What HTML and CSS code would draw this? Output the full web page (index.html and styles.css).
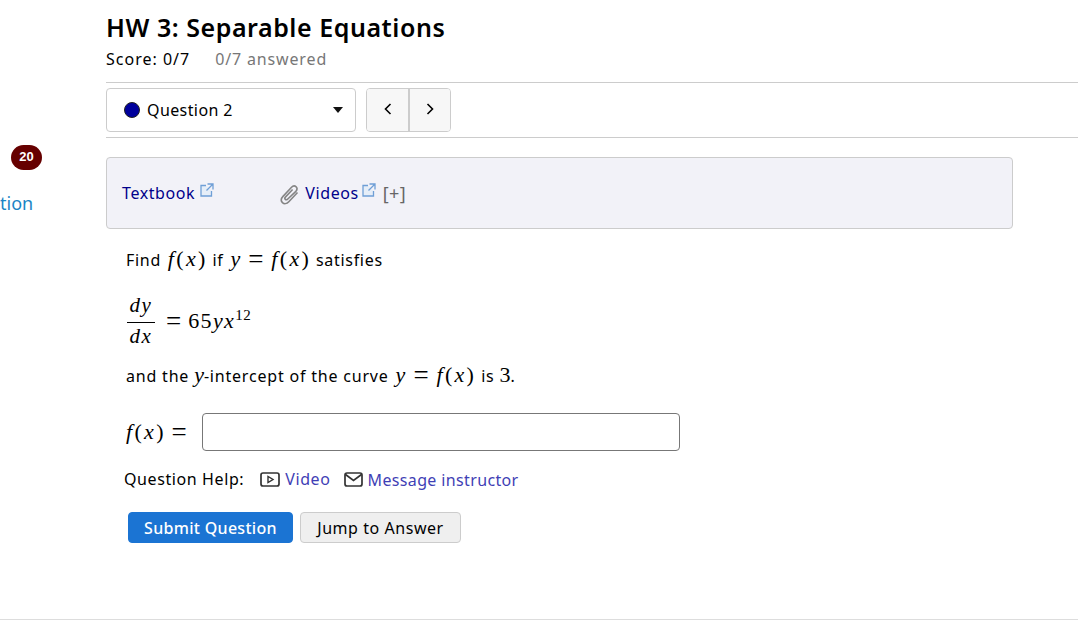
FILE: index.html
```html
<!DOCTYPE html>
<html lang="en">
<head>
  <meta charset="UTF-8" />
  <title>HW 3: Separable Equations</title>
  <link rel="stylesheet" href="styles.css">
</head>
<body>
  <div class="page">
    <!-- Left nav, cut off by the window edge -->
    <div class="sidebar">
      <span class="badge">20</span>
      <a class="side-link" href="#">tion</a>
    </div>

    <div class="main-content">
      <h1>HW 3: Separable Equations</h1>
      <div class="score-line">
        <span>Score: 0/7</span>
        <span class="answered">0/7 answered</span>
      </div>

      <div class="nav-bar">
        <div class="question-select">
          <span class="dot"></span>
          <span class="question-label">Question 2</span>
          <span class="caret"></span>
        </div>
        <div class="pager">
          <button class="pager-btn" aria-label="Previous">
            <svg width="8" height="12" viewBox="0 0 8 12"><path d="M6.500 1 1.500 6l5 5" fill="none" stroke="#000" stroke-width="1.600"/></svg>
          </button>
          <button class="pager-btn" aria-label="Next">
            <svg width="8" height="12" viewBox="0 0 8 12"><path d="M1.500 1l5 5-5 5" fill="none" stroke="#000" stroke-width="1.600"/></svg>
          </button>
        </div>
      </div>

      <div class="resources">
        <a class="res-link textbook" href="#">Textbook</a>
        <svg class="ext-icon" width="14" height="14" viewBox="0 0 14 14"><path d="M6 2.500H1v10.500h10.500V8" fill="#e6eef8" stroke="#6f9fd6" stroke-width="1.300"/><path d="M7.500 1H13v5.500M13 1 6.500 7.500" fill="none" stroke="#6f9fd6" stroke-width="1.300"/></svg>
        <svg class="clip-icon" width="19" height="21" viewBox="0 0 19 21"><path d="M17.500 8.500 8.800 17.800c-2 2.100-4.700 2.300-6.300.8-1.600-1.600-1.400-4.200.5-6.200l8.300-8.900c1.500-1.600 3.500-1.900 4.800-.7 1.300 1.300 1 3.300-.5 4.900L7.800 15c-.8.900-1.900 1-2.500.4-.6-.6-.5-1.700.3-2.500l7-7.400" fill="none" stroke="#858585" stroke-width="1.600"/></svg>
        <a class="res-link videos" href="#">Videos</a>
        <svg class="ext-icon" width="14" height="14" viewBox="0 0 14 14"><path d="M6 2.500H1v10.500h10.500V8" fill="#e6eef8" stroke="#6f9fd6" stroke-width="1.300"/><path d="M7.500 1H13v5.500M13 1 6.500 7.500" fill="none" stroke="#6f9fd6" stroke-width="1.300"/></svg>
        <span class="more">[+]</span>
      </div>

      <div class="question">
        <p class="line-first">Find <span class="math"><i>f</i>(<i>x</i>)</span> if <span class="math"><i>y</i> <span class="eq">=</span> <i>f</i>(<i>x</i>)</span> satisfies</p>

        <div class="equation math">
          <span class="frac">
            <span class="num"><i>dy</i></span>
            <span class="den"><i>dx</i></span>
          </span>
          <span class="rhs"><span class="eq">=</span> 65<i>yx</i><sup>12</sup></span>
        </div>

        <p class="line-last">and the <span class="math tight"><i>y</i></span>-intercept of the curve <span class="math"><i>y</i> <span class="eq">=</span> <i>f</i>(<i>x</i>)</span> is <span class="math tight">3</span>.</p>

        <div class="answer-row">
          <span class="math answer-label"><i>f</i>(<i>x</i>) <span class="eq">=</span></span>
          <input class="answer-input" type="text">
        </div>
      </div>

      <div class="help-row">
        <span class="help-label">Question Help:</span>
        <svg class="help-icon" width="20" height="15" viewBox="0 0 20 15"><rect x="1" y="1" width="18" height="13" rx="2" fill="none" stroke="#333" stroke-width="1.700"/><path d="M8 4.500v6l5-3z" fill="none" stroke="#333" stroke-width="1.400"/></svg>
        <a class="help-link" href="#">Video</a>
        <svg class="help-icon mail" width="19" height="15" viewBox="0 0 19 15"><rect x="1" y="1" width="17" height="13" rx="2" fill="none" stroke="#333" stroke-width="1.700"/><path d="m1.500 2.500 8 6 8-6" fill="none" stroke="#333" stroke-width="1.700"/></svg>
        <a class="help-link message" href="#">Message instructor</a>
      </div>

      <div class="actions">
        <button class="btn-primary">Submit Question</button>
        <button class="btn-secondary">Jump to Answer</button>
      </div>
    </div>
  </div>
  <div class="footer"></div>
</body>
</html>
```
FILE: styles.css
```css
* {
  margin: 0;
  padding: 0;
  box-sizing: border-box;
}

html, body {
  height: 100%;
  overflow: hidden;
}

body {
  font-family: "Noto Sans", sans-serif;
  font-size: 16px;
  letter-spacing: 0.4px;
  color: #000;
  background: #fff;
}

.page {
  display: flex;
  height: 619px;
}

/* Sidebar */
.sidebar {
  width: 106px;
  flex-shrink: 0;
  padding-top: 145px;
}

.badge {
  display: block;
  width: 31px;
  height: 25px;
  margin-left: 11px;
  border-radius: 13px;
  background: #660000;
  color: #fff;
  font-family: "Liberation Sans", sans-serif;
  font-size: 13px;
  font-weight: bold;
  letter-spacing: 0;
  line-height: 24px;
  text-align: center;
}

.side-link {
  display: block;
  margin-top: 20px;
  color: #1a85c5;
  font-size: 18px;
  letter-spacing: 0;
  line-height: 26px;
  text-decoration: none;
}

/* Main */
.main-content {
  flex: 1;
  padding-top: 10px;
}

h1 {
  font-size: 25px;
  font-weight: 600;
  letter-spacing: 0.55px;
  line-height: 34px;
}

.score-line {
  display: flex;
  gap: 25px;
  margin-top: 4px;
  font-size: 16px;
  letter-spacing: 1px;
  line-height: 22px;
}

.answered {
  color: #777;
  letter-spacing: 0.85px;
}

.nav-bar {
  display: flex;
  gap: 10px;
  margin-top: 12px;
  padding: 5px 0;
  border-top: 1px solid #ccc;
  border-bottom: 1px solid #ccc;
}

.question-select {
  display: flex;
  align-items: center;
  width: 250px;
  height: 44px;
  padding: 0 12px 0 17px;
  border: 1px solid #ccc;
  border-radius: 4px;
  background: #fff;
}

.dot {
  width: 16px;
  height: 16px;
  border: 1px solid #222;
  border-radius: 50%;
  background: #00009c;
}

.question-label {
  flex: 1;
  margin-left: 7px;
}

.caret {
  width: 0;
  height: 0;
  border-left: 5px solid transparent;
  border-right: 5px solid transparent;
  border-top: 6px solid #111;
}

.pager {
  display: flex;
  height: 44px;
  border: 1px solid #ccc;
  border-radius: 4px;
  overflow: hidden;
}

.pager-btn {
  width: 41px;
  border: none;
  background: #f7f7f7;
}

.pager-btn + .pager-btn {
  width: 42px;
  border-left: 2px solid #ccc;
}

/* Textbook / Videos box */
.resources {
  display: flex;
  align-items: center;
  width: 907px;
  height: 72px;
  margin-top: 19px;
  padding-left: 15px;
  border: 1px solid #ccc;
  border-radius: 4px;
  background: #f2f2f8;
}

.res-link {
  color: #00008b;
  font-size: 16px;
  letter-spacing: 0.6px;
  text-decoration: none;
}

.ext-icon {
  margin: -6px 0 0 5px;
}

.videos + .ext-icon {
  margin-left: 3px;
}

.clip-icon {
  margin-left: 66px;
  margin-right: 6px;
  margin-top: 2px;
}

.more {
  margin-left: 7px;
  color: #666;
  font-size: 18px;
  letter-spacing: 0.3px;
}

/* Question text */
.question {
  padding: 17px 0 0 20px;
  font-size: 16px;
  letter-spacing: 0.7px;
}

.math {
  margin-left: 2px;
  font-family: "Liberation Serif", serif;
  font-size: 22px;
  letter-spacing: 2.3px;
}

.math.tight {
  margin-left: 0;
  letter-spacing: 0;
}

.eq {
  margin-left: -2px;
  font-size: 27px;
  letter-spacing: 0;
  line-height: 0;
  vertical-align: -2px;
}

.line-first,
.line-last {
  line-height: 26px;
}

.line-last {
  letter-spacing: 0.8px;
}

.equation {
  display: flex;
  align-items: center;
  gap: 12px;
  margin: 19px 0 0;
}

.frac {
  display: flex;
  flex-direction: column;
  align-items: center;
  width: 30px;
  padding: 0 1px;
  font-size: 21px;
  letter-spacing: 1.500px;
}

.num {
  width: 100%;
  padding-bottom: 4px;
  text-align: center;
  border-bottom: 1px solid #000;
  line-height: 26px;
}

.den {
  padding-bottom: 3px;
  line-height: 27px;
}

.rhs {
  margin-top: -4px;
  letter-spacing: 1.400px;
}

sup {
  font-size: 15px;
  letter-spacing: 0.5px;
  line-height: 0;
}

.line-last {
  margin-top: 9px;
}

.answer-row {
  display: flex;
  align-items: center;
  gap: 15px;
  margin-top: 24px;
}

.answer-label {
  margin: 0;
}

.answer-input {
  width: 478px;
  height: 38px;
  border: 1px solid #777;
  border-radius: 4px;
  background: #fff;
}

/* Help links */
.help-row {
  display: flex;
  align-items: center;
  margin-top: 16px;
  padding-left: 18px;
  letter-spacing: 0.6px;
  line-height: 22px;
}

.help-icon {
  margin-left: 16px;
  margin-right: 5px;
}

.help-icon.mail {
  margin-left: 13px;
}

.help-link {
  color: #3f3fb5;
  text-decoration: none;
}

.message {
  margin-top: 2px;
  letter-spacing: 0.36px;
}

/* Buttons */
.actions {
  display: flex;
  gap: 7px;
  margin-top: 21px;
  padding-left: 22px;
}

.actions button {
  height: 31px;
  border-radius: 4px;
  font-family: inherit;
  font-size: 16px;
}

.btn-primary {
  width: 165px;
  border: 1px solid #1b74d3;
  background: #1b74d3;
  color: #fff;
  font-weight: 500;
  letter-spacing: 0.3px;
}

.btn-secondary {
  width: 161px;
  border: 1px solid #ccc;
  background: #efefef;
  color: #000;
  letter-spacing: 0.55px;
}

.footer {
  height: 10px;
  border-top: 1px solid #ddd;
}
```
